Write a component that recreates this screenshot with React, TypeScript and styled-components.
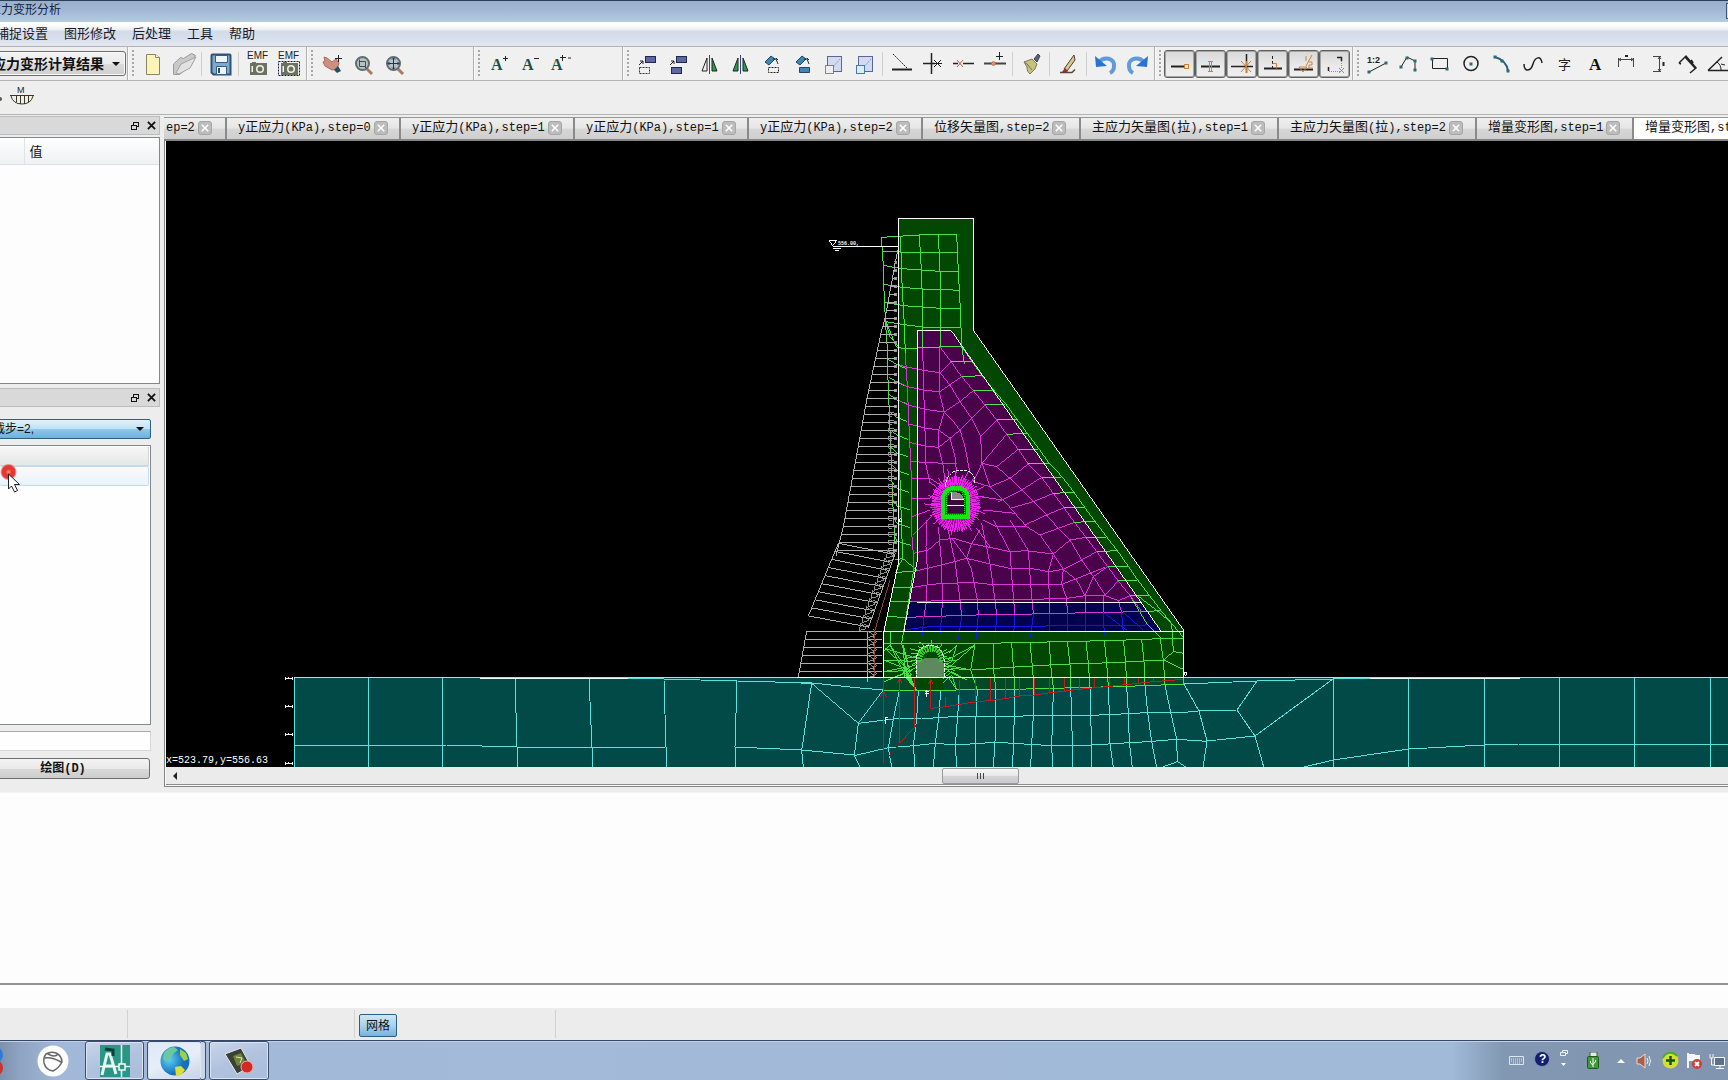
import React from "react";
import styled, { createGlobalStyle, css } from "styled-components";

const SANS = `"Liberation Sans", "Noto Sans CJK SC", sans-serif`;
const MONO = `"Liberation Mono", "Noto Sans CJK SC", monospace`;

const GlobalStyle = createGlobalStyle`
  * { box-sizing: border-box; }
  html, body { margin: 0; padding: 0; height: 100%; overflow: hidden; }
  body { background: #ededed; font-family: ${SANS}; font-size: 13px; color: #111; }
  button, input, select { font: inherit; color: inherit; }
`;

/* ---------- page frame ---------- */

const Page = styled.div`
  height: 100vh;
  display: flex;
  flex-direction: column;
  overflow: hidden;
`;

const TitleBar = styled.header`
  flex: none;
  height: 22px;
  display: flex;
  align-items: flex-start;
  justify-content: space-between;
  border-top: 1px solid #2c3f5a;
  background: linear-gradient(#98aecb, #a3b8d5 45%, #b5cbe0);
`;

const TitleText = styled.h1`
  margin: 0;
  width: 61px;
  display: flex;
  justify-content: flex-end;
  font-size: 12px;
  line-height: 18px;
  font-weight: 400;
  white-space: nowrap;
  color: #16233a;
`;

const CaptionButton = styled.button`
  width: 2px;
  height: 16px;
  margin-top: 2px;
  padding: 0;
  border: 1px solid #3c5576;
  border-right: 0;
  background: #d3e0ef;
`;

const MenuBar = styled.nav`
  flex: none;
  height: 25px;
  display: flex;
  align-items: center;
  gap: 16px;
  padding-bottom: 1px;
  border-bottom: 1px solid #b3b3b6;
  background: linear-gradient(#ffffff 0 3px, #f5f6f8 5px, #e9edf3 8px, #d3dcea 9px, #d9e0ec 17px, #e4e7f0);
`;

const MenuItem = styled.button`
  flex: none;
  padding: 0;
  border: 0;
  background: none;
  font-size: 13px;
  line-height: 20px;
  white-space: nowrap;
  color: #1a1a28;
  &:first-child {
    width: 48px;
    display: flex;
    justify-content: flex-end;
  }
`;

/* ---------- toolbars ---------- */

const ToolBar = styled.div`
  flex: none;
  height: 34px;
  display: flex;
  align-items: stretch;
  overflow: hidden;
  border-bottom: 1px solid #b4b4b4;
  background: #eeeeee;
`;

const ResultSelect = styled.select`
  appearance: none;
  flex: none;
  align-self: center;
  width: 140px;
  height: 25px;
  margin: 0 1px 0 -14px;
  padding: 0 0 0 5px;
  border: 1px solid #6d6d6d;
  border-radius: 3px;
  box-shadow: inset 0 0 0 1px #f8f8f8;
  font-size: 14px;
  font-weight: 700;
  background: linear-gradient(#f2f2f2, #ebebeb 50%, #dcdcdc 51%, #cfcfcf);
`;

const SelectWrap = styled.div`
  display: flex;
  align-items: center;
  position: relative;
  &::after {
    content: "";
    position: absolute;
    right: 7px;
    border: 4px solid transparent;
    border-top-color: #111;
    border-bottom: 0;
    pointer-events: none;
  }
`;

const ToolGroup = styled.div<{ $width?: number }>`
  flex: none;
  display: flex;
  align-items: center;
  padding-right: 2px;
  border-left: 1px solid #b0b0b0;
  box-shadow: inset 1px 0 #fafafa;
  background: #f0f0f0;
  width: ${(p) => (p.$width ? `${p.$width}px` : "auto")};
`;

const Grip = styled.span`
  flex: none;
  width: 2px;
  height: 28px;
  margin: 0 3px 0 4px;
  background: repeating-linear-gradient(#a8a8a8 0 2px, transparent 2px 4px);
`;

const Separator = styled.span`
  flex: none;
  width: 1px;
  height: 24px;
  margin: 0 3px 0 2px;
  background: #cfcfcf;
`;

const ToolButton = styled.button<{ $pressed?: boolean }>`
  flex: none;
  width: 31px;
  height: 28px;
  padding: 0;
  display: flex;
  align-items: center;
  justify-content: center;
  border: 1px solid transparent;
  background: none;
  ${(p) =>
    p.$pressed &&
    css`
      border-color: #5f5f5f;
      border-radius: 3px;
      box-shadow: inset 0 0 0 1px #a5a5a5;
      background: linear-gradient(#d8d8d8, #eaeaea 60%, #efefef);
    `}
`;

const DiagramBar = styled(ToolBar)`
  align-items: flex-end;
  padding: 0 0 2px 3px;
`;

const IconSvg = styled.svg`
  flex: none;
  display: block;
  overflow: visible;
`;

/* ---------- workspace ---------- */

const Workspace = styled.main`
  flex: 1;
  min-height: 0;
  display: flex;
  gap: 4px;
`;

const DockColumn = styled.aside`
  flex: none;
  width: 160px;
  display: flex;
  flex-direction: column;
  padding-top: 1px;
`;

const DockTitle = styled.div`
  flex: none;
  height: 19px;
  display: flex;
  align-items: center;
  justify-content: flex-end;
  gap: 4px;
  padding-right: 2px;
  border: 1px solid #bcbcbc;
  border-left: 0;
  background: #d9d9d9;
`;

const DockButton = styled.button`
  width: 12px;
  height: 14px;
  padding: 0;
  border: 0;
  background: none;
  display: flex;
  align-items: center;
  justify-content: center;
`;

const PropertyBox = styled.div`
  flex: none;
  height: 247px;
  margin: 2px 0 4px;
  border: 1px solid #828790;
  border-left: 0;
  background: #fdfdfd;
`;

const PropertyTable = styled.table`
  width: 100%;
  border-collapse: collapse;
  th {
    height: 26px;
    padding: 2px 0 0 5px;
    text-align: left;
    font-size: 13px;
    line-height: 22px;
    font-weight: 400;
    border-bottom: 1px solid #dcdfe3;
    background: linear-gradient(#fefefe, #f6f7f9 50%, #f0f1f3);
  }
  th:first-child {
    width: 24px;
    border-right: 1px solid #dfe2e6;
  }
`;

const StepPanel = styled.div`
  flex: 1;
  display: flex;
  flex-direction: column;
  padding: 12px 9px 0 0;
`;

const StepSelect = styled.select`
  appearance: none;
  height: 20px;
  width: 175px;
  margin-left: -24px;
  padding: 0 0 0 4px;
  border: 1px solid #2f5f84;
  border-radius: 2px;
  font-family: ${SANS};
  font-size: 12px;
  line-height: 18px;
  background: linear-gradient(#dff2fb, #bfe2f5 48%, #90c8ea 52%, #6bb0dc);
`;

const StepList = styled.div`
  height: 280px;
  margin: 6px 0;
  padding: 1px 1px 0 0;
  border: 1px solid #828790;
  border-left: 0;
  background: #fefefe;
`;

const StepHeader = styled.div`
  height: 19px;
  border-right: 1px solid #d5d5d5;
  border-bottom: 1px solid #d5d5d5;
  background: linear-gradient(#f6f6f6, #e6e7e7);
`;

const StepRow = styled.button`
  display: block;
  width: 100%;
  height: 20px;
  border: 1px solid #c4dbee;
  border-left: 0;
  border-radius: 2px;
  background: linear-gradient(#f9fbfe, #eaf3fc);
`;

const StepField = styled.input`
  height: 20px;
  width: 100%;
  border: 1px solid #d8d8d8;
  border-left: 0;
  border-top-color: #a9a9a9;
  background: #fefefe;
`;

const DrawButton = styled.button`
  height: 21px;
  width: 174px;
  margin: 7px 0 0 -24px;
  padding: 0;
  border: 1px solid #6e6e6e;
  border-radius: 3px;
  font-family: ${MONO};
  font-size: 12px;
  line-height: 18px;
  font-weight: 700;
  background: linear-gradient(#f4f4f4, #e9e9e9 50%, #d9d9d9 52%, #cdcdcd);
`;

const View = styled.section`
  flex: 1;
  min-width: 0;
  display: flex;
  flex-direction: column;
  padding: 2px 0 5px;
`;

const TabStrip = styled.div`
  flex: none;
  height: 22px;
  display: flex;
  align-items: stretch;
  overflow: hidden;
`;

const Tab = styled.div<{ $width: number; $active?: boolean }>`
  flex: none;
  width: ${(p) => p.$width}px;
  display: flex;
  align-items: center;
  gap: 3px;
  padding: 0 0 1px 11px;
  border-top: 1px solid #989898;
  border-right: 2px solid #8a8a8a;
  background: ${(p) => (p.$active ? "#ffffff" : "linear-gradient(#efefef, #e6e6e6 48%, #d6d6d6 54%, #cfcfcf)")};
  &:first-child {
    padding-left: 2px;
  }
`;

const TabLabel = styled.button`
  padding: 0;
  border: 0;
  background: none;
  font-family: ${MONO};
  font-size: 12px;
  line-height: 18px;
  white-space: nowrap;
`;

const Han = styled.span`
  font-size: 13px;
`;

const TabClose = styled.button`
  flex: none;
  width: 14px;
  height: 14px;
  padding: 0;
  display: flex;
  align-items: center;
  justify-content: center;
  border: 1px solid #a6a6a6;
  border-radius: 3px;
  background: #bcbcbc;
`;

const CanvasFrame = styled.div`
  flex: 1;
  min-height: 0;
  display: flex;
  flex-direction: column;
  border: 1px solid #858585;
  border-width: 2px 0 1px 1px;
  padding: 0 0 1px 1px;
  background: #fafafa;
`;

const Canvas = styled.div`
  flex: 1;
  min-height: 0;
  position: relative;
  overflow: hidden;
  background: #000;
  svg {
    display: block;
    width: 100%;
    height: 100%;
  }
`;

const Coordinates = styled.output`
  position: absolute;
  left: 0;
  bottom: 0;
  font-family: ${MONO};
  font-size: 10px;
  line-height: 13px;
  color: #ffffff;
`;

const ScrollTrack = styled.div`
  flex: none;
  height: 18px;
  display: flex;
  align-items: center;
  border-bottom: 1px solid #8d8d8d;
  background: #ebebeb;
`;

const ScrollArrow = styled.button`
  width: 17px;
  height: 17px;
  padding: 0;
  display: flex;
  align-items: center;
  justify-content: center;
  border: 0;
  background: none;
`;

const ScrollThumb = styled.button`
  width: 77px;
  height: 16px;
  margin-left: 48.6%;
  padding: 0;
  display: flex;
  align-items: center;
  justify-content: center;
  gap: 2px;
  border: 1px solid #9a9a9a;
  border-radius: 2px;
  background: linear-gradient(#f6f6f6, #e8e8e8 48%, #d4d4d6 52%, #cacacc);
  i {
    width: 1px;
    height: 6px;
    background: #444;
  }
`;

const Output = styled.section`
  flex: none;
  height: 216px;
  display: flex;
  flex-direction: column;
  border-top: 1px solid #f4f4f4;
  background: #fdfdfd;
`;

const OutputLog = styled.div`
  flex: 1;
  border-bottom: 2px solid #939393;
`;

const CommandInput = styled.input`
  flex: none;
  height: 23px;
  width: 100%;
  border: 0;
  background: #fdfdfd;
`;

const StatusBar = styled.footer`
  flex: none;
  height: 32px;
  display: flex;
  align-items: center;
  background: #ececec;
`;

const StatusCell = styled.div<{ $width: number }>`
  flex: none;
  width: ${(p) => p.$width}px;
  height: 28px;
  display: flex;
  align-items: flex-end;
  padding: 0 0 1px 4px;
  border-right: 1px solid #d2d2d2;
`;

const GridToggle = styled.button`
  width: 38px;
  height: 23px;
  padding: 0;
  border: 1px solid #2c5f86;
  border-radius: 2px;
  font-size: 12px;
  line-height: 20px;
  background: linear-gradient(#cfe6f4, #a9d2ec 50%, #78b2da);
`;

/* ---------- taskbar ---------- */

const TaskBar = styled.footer`
  flex: none;
  height: 40px;
  display: flex;
  align-items: stretch;
  border-top: 1px solid #33486a;
  box-shadow: inset 0 1px #c3d0e0;
  background: linear-gradient(90deg, #7c91ab 0, #8fa4c2 20px, #a2b8d8 60px, #a3bad8 30%, #a0bad8 84%, #8298b2 87%, #8195b0 100%);
`;

const TaskSlot = styled.button<{ $width: number; $framed?: boolean; $lit?: boolean }>`
  flex: none;
  width: ${(p) => p.$width}px;
  padding: 0;
  display: flex;
  align-items: center;
  justify-content: center;
  border: 0;
  background: none;
  ${(p) =>
    p.$framed &&
    css`
      margin-right: 3px;
      border: 1px solid #3c4d6b;
      border-radius: 3px;
      box-shadow: inset 0 0 0 1px #dbe5f2;
      background: ${p.$lit
        ? "linear-gradient(160deg, #dde8f6, #e8eef8 50%, #c4d2e8)"
        : "linear-gradient(160deg, #c9d6ea, #b0c2de 50%, #a9bedc)"};
    `}
`;

const QuickLaunch = styled.div`
  flex: none;
  display: flex;
  padding-right: 9px;
`;

const StackEdge = styled.span`
  flex: none;
  width: 5px;
  margin: 0 3px 0 -4px;
  border: 1px solid #3c4d6b;
  border-left: 0;
  border-radius: 0 3px 3px 0;
  background: #c9d6ea;
`;

const Tray = styled.div`
  margin-left: auto;
  display: flex;
  align-items: center;
`;

const TrayButton = styled.button<{ $width: number }>`
  width: ${(p) => p.$width}px;
  padding: 0;
  display: flex;
  align-items: center;
  justify-content: center;
  border: 0;
  background: none;
`;

const PointerMark = styled.div`
  position: absolute;
  left: 0;
  top: 463px;
  pointer-events: none;
`;

/* ---------- toolbar icons ---------- */

const Icon = ({ children }: { children: React.ReactNode }) => (
  <IconSvg width="26" height="26" viewBox="0 0 26 26" fill="none" stroke="#222" strokeWidth="1" aria-hidden>
    {children}
  </IconSvg>
);

const Camera = () => (
  <g stroke="none">
    <path d="M5 12h2v-1h4v1h11v12H5z" fill="#6c7263" />
    <path d="M6.500 15h1.500v6H6.500z" fill="#f3f3e6" />
    <circle cx="15" cy="18" r="4" fill="#f3f3e6" />
    <circle cx="15" cy="18" r="2.500" fill="#6c7263" />
  </g>
);

const EmfText = () => (
  <text x="2" y="8" fontFamily="Liberation Sans, sans-serif" fontSize="10" stroke="none" fill="#222">EMF</text>
);

const BigA = ({ x = 5 }: { x?: number }) => (
  <text x={x} y="19" fontFamily="Liberation Serif, serif" fontWeight="700" fontSize="16" fill="#1f4f42" stroke="none">A</text>
);

const Node = ({ x, y }: { x: number; y: number }) => <rect x={x - 1.5} y={y - 1.5} width="3" height="3" fill="#2e6a70" stroke="none" />;

const fileIcons = [
  ["新建", <Icon><path d="M6.500 3.500h9l4 3v17h-13z" fill="#fbf4b8" stroke="#8a8560" /><path d="M15.500 3.500v3h4" stroke="#8a8560" fill="#fffef0" /></Icon>],
  ["打开", <Icon><path d="M2.500 23.500V13l7-6.500 3 1 8-5 4 2-6 11-10 8z" fill="#c9c9c9" stroke="#9a9a9a" /><path d="M5 22l5-9 15-7-6 11-11 6z" fill="#e2e2e2" stroke="#a2a2a2" /></Icon>],
  null,
  ["保存", <Icon><path d="M3.500 4.500q0-1 1-1h17q1 0 1 1v19h-17l-2-2z" fill="#7fa8cc" stroke="#2f5278" strokeWidth="2" /><path d="M7.500 4.500h12v7h-12zM8.500 15.500h10v8h-10z" fill="#eef4f9" stroke="#335d86" /><path d="M11 17v5" stroke="#284c72" strokeWidth="2" /></Icon>],
  null,
  ["导出EMF", <Icon><EmfText /><Camera /></Icon>],
  ["框选导出EMF", <Icon><EmfText /><Camera /><path d="M2.500 10.500h21v14h-21z" stroke="#18184a" strokeDasharray="2 1" /></Icon>],
] as const;

const Lens = () => (
  <g>
    <path d="M17 18l5 5" stroke="#a87a5e" strokeWidth="3" />
    <circle cx="12.500" cy="12.500" r="6.500" fill="#b6c2c4" stroke="#5e6c70" strokeWidth="2" />
  </g>
);

const viewIcons = [
  ["平移", <Icon><path d="M5 6l3 1 5 4 4-3 3 4-2 6-5 1-7-4-2-4 2-1z" fill="#cc8f82" stroke="#a86c60" /><path d="M15 19l4-4 3 5-4 2z" fill="#24525e" stroke="none" /><path d="M19.500 4v7M16 7.500h7" /></Icon>],
  ["窗口缩放", <Icon><Lens /><path d="M9.500 10.500h6v5h-6zM9.500 8.500v4M15.500 13v4" stroke="#3e4c50" /></Icon>],
  ["全部显示", <Icon><Lens /><path d="M12.500 7v11M7 12.500h11M11 8.500L12.500 7 14 8.500M11 16.500l1.500 1.500 1.500-1.500M8.500 11L7 12.500 8.500 14M16.500 11l1.500 1.500-1.500 1.500" stroke="#20307a" /></Icon>],
] as const;

const textIcons = [
  ["放大文字", <Icon><BigA /><path d="M19.500 5v5M17 7.500h5" /></Icon>],
  ["缩小文字", <Icon><BigA /><path d="M17 7.500h5" /></Icon>],
  ["恢复文字", <Icon><BigA x={3} /><path d="M14.500 4v6M12 6.500h6M20 7h3" /></Icon>],
] as const;

const Block = ({ x, y, dash }: { x: number; y: number; dash?: boolean }) => (
  <rect x={x} y={y} width="10" height="6" fill={dash ? "none" : "#5c67a6"} stroke={dash ? "#333" : "#22284a"} strokeDasharray={dash ? "2 1" : undefined} />
);
const Turn = () => <path d="M14 8h3l2 5M17 7l2 2" stroke="#1c2b3b" />;

const editIcons = [
  ["移动", <Icon><path d="M4 14l4-4M5 10h3v3" /><Block x={10.5} y={5.5} /><Block x={4.5} y={16.500} dash /></Icon>],
  ["复制", <Icon><path d="M4 14l4-4M5 10h3v3" /><Block x={10.5} y={5.5} /><Block x={5.5} y={16.500} /></Icon>],
  ["镜像移动", <Icon><path d="M10 7v13H5z" /><path d="M15 7v13h5z" fill="#2c9a4c" /><path d="M12.500 4v19" stroke="#35458c" /></Icon>],
  ["镜像复制", <Icon><path d="M10 7v13H5z" fill="#2c9a4c" /><path d="M15 7v13h5z" fill="#2c9a4c" /><path d="M12.500 4v19" stroke="#35458c" /></Icon>],
  ["旋转移动", <Icon><path d="M6 11l6-6 4 3-6 6z" fill="#3e86b8" stroke="#1d4668" /><Turn /><path d="M9.500 16.500h10v5h-10z" strokeDasharray="2 1" /></Icon>],
  ["旋转复制", <Icon><path d="M6 11l6-6 4 3-6 6z" fill="#3e86b8" stroke="#1d4668" /><Turn /><path d="M9.500 16.500h10v5h-10z" fill="#3e86b8" stroke="#1d4668" /></Icon>],
  ["缩放移动", <Icon><rect x="6.500" y="5.500" width="14" height="15" fill="#d3daf0" stroke="#59669a" /><path d="M12 16l7-8" stroke="#8d99c4" strokeDasharray="2 1" /><rect x="4.500" y="14.500" width="8" height="8" fill="#eee" strokeDasharray="1 1" /></Icon>],
  ["缩放复制", <Icon><rect x="6.500" y="5.500" width="14" height="15" fill="#d3daf0" stroke="#59669a" /><path d="M12 16l7-8" stroke="#8d99c4" strokeDasharray="2 1" /><rect x="4.500" y="14.500" width="8" height="8" fill="#dcecfa" stroke="#4777b4" /></Icon>],
  null,
  ["延伸", <Icon><path d="M3 18.500h20" strokeWidth="2" /><path d="M4 3l14 14" strokeDasharray="2 1" /></Icon>],
  ["修剪", <Icon><path d="M3 12.500h12M11.500 2v21" strokeWidth="1.500" /><path d="M14 9l7 7M21 9l-7 7M15 12.500h7" /></Icon>],
  ["打断", <Icon><path d="M2 12.500h5M12 12.500h11" strokeWidth="1.500" /><path d="M6 9l6 7M12 9l-6 7" stroke="#c4603a" /></Icon>],
  ["插入节点", <Icon><path d="M2 12.500h22" strokeWidth="2" stroke="#444" /><circle cx="11.500" cy="12.500" r="1.800" stroke="#c4603a" fill="#eca070" /><path d="M17.500 1v8M14 5.500h7" /></Icon>],
  null,
  ["格式刷", <Icon><path d="M15 8l4-5 2 2-3 6z" fill="#59617c" stroke="#3c425c" /><path d="M5 11l8-3 5 5-2 5-5 5c-2-2-3-3-3-7z" fill="#c5c27a" stroke="#7d7b50" /><path d="M5 11l3 2 5 6" stroke="#85639a" /></Icon>],
  null,
  ["删除", <Icon><path d="M4 21.500h12l3-3" strokeWidth="1.500" stroke="#554838" /><path d="M8 18L18 4l1 5-8 11z" fill="#d9c88a" stroke="#4d4030" /><path d="M6 21l3-4 3 3-2 2z" fill="#9b2c3a" stroke="none" /></Icon>],
  null,
  ["撤销", <Icon><path d="M6 11c5-6 16-4 15 4 0 4-2 6-4 7" stroke="#5f9bdc" strokeWidth="4" /><path d="M2 5l1 11 11-1z" fill="#2a74cf" stroke="none" /></Icon>],
  ["重做", <Icon><path d="M20 11C15 5 4 7 5 15c0 4 2 6 4 7" stroke="#5f9bdc" strokeWidth="4" /><path d="M24 5l-1 11-11-1z" fill="#2a74cf" stroke="none" /></Icon>],
] as const;

const OR = "#c8813f";
const snapIcons = [
  ["端点捕捉", <Icon><path d="M4 15.500h13" strokeWidth="2" /><rect x="17.500" y="13.500" width="4" height="4" stroke={OR} /></Icon>],
  ["中点捕捉", <Icon><path d="M3 15.500h19" strokeWidth="2" /><path d="M10 10.500h5M10 20.500h5M11.500 11v9M13.500 11v9" stroke={OR} /></Icon>],
  ["交点捕捉", <Icon><path d="M2 15.500h22M17.500 3v19" strokeWidth="1.500" /><path d="M12 10l10 11M22 10l-10 11M17.500 10v12" stroke={OR} /></Icon>],
  ["垂足捕捉", <Icon><path d="M4 17.500h18" strokeWidth="2" /><path d="M12.500 5v12" strokeDasharray="3 2" /><path d="M12.500 12.500h4v5" stroke={OR} /></Icon>],
  ["等分捕捉", <Icon><path d="M3 18.500h19" strokeWidth="2" /><path d="M8 16h8l-4 5z" stroke={OR} /><path d="M15 5v5M21 4l-6 11M18 11h3v3h-3v3h4" stroke={OR} /></Icon>],
  ["延长捕捉", <Icon><path d="M6.500 16v4M15 6.500h5M19.500 6v4" strokeWidth="1.500" /><path d="M7 20.500h11M19.500 10v8" stroke={OR} strokeDasharray="1 1" /><path d="M17 17l5 5M22 17l-5 5" stroke={OR} /></Icon>],
] as const;

const drawIcons = [
  ["直线", <Icon><text x="2" y="12" fontFamily="Liberation Sans, sans-serif" fontSize="9" fontWeight="700" fill="#222" stroke="none">1:2</text><path d="M4 21L21 12" /><Node x={4} y={21} /><Node x={21} y={12} /></Icon>],
  ["多段线", <Icon><path d="M5 16l6-10 8 4v9" /><Node x={5} y={16} /><Node x={11} y={7} /><Node x={19} y={10} /><Node x={19} y={19} /></Icon>],
  ["矩形", <Icon><path d="M5.500 7.500h15v10h-15z" /><Node x={5} y={8} /><Node x={20} y={18} /></Icon>],
  ["圆", <Icon><circle cx="13" cy="12.500" r="7" strokeWidth="1.500" /><Node x={13} y={13} /></Icon>],
  ["圆弧", <Icon><path d="M6 6c7 2 12 7 13 14" stroke="#266080" strokeWidth="2" /><Node x={6} y={6} /><Node x={13} y={10} /><Node x={19} y={20} /></Icon>],
  ["样条", <Icon><path d="M4 13c0 9 7 7 9 0s8-9 9-1" strokeWidth="1.500" /></Icon>],
  ["单行文字", <Icon><text x="7" y="18" fontFamily="Noto Sans CJK SC, sans-serif" fontSize="13" fill="#222" stroke="none">字</text></Icon>],
  ["文字", <Icon><text x="7" y="19" fontFamily="Liberation Serif, serif" fontWeight="700" fontSize="17" fill="#111" stroke="none">A</text></Icon>],
  ["水平标注", <Icon><path d="M5.500 7v9M20.500 7v9M5.500 8.500h15M8 7L6 8.500 8 10M18 7l2 1.500-2 1.500" stroke="#444" /><path d="M12 5h3" strokeWidth="2" /></Icon>],
  ["垂直标注", <Icon><path d="M9 5.500h8M9 20.500h8M15.500 5.500v15M14 8l1.500-2L17 8M14 18l1.500 2L17 18" stroke="#444" /><path d="M19.500 11v4" strokeWidth="2" /></Icon>],
  ["对齐标注", <Icon><path d="M4 12l7-7 10 12-6 5M4 12l2 1M10 6l10 11" strokeWidth="1.500" /><path d="M16 9l2 3" strokeWidth="2" /></Icon>],
  ["角度标注", <Icon><path d="M2 19.500L16 6M2 19.500h24" strokeWidth="1.500" /><path d="M11 11c3 2 4 5 4 8M15 13l4 1" /></Icon>],
] as const;

type Tool = readonly [string, React.ReactNode] | null;

const Tools = ({ items, pressed }: { items: readonly Tool[]; pressed?: boolean }) => (
  <>
    <Grip />
    {items.map((it, i) =>
      it ? (
        <ToolButton key={i} type="button" aria-label={it[0]} aria-pressed={pressed} $pressed={pressed}>
          {it[1]}
        </ToolButton>
      ) : (
        <Separator key={i} />
      )
    )}
  </>
);

/* ---------- model drawing ---------- */

type Pt = [number, number];
const lines = (list: string[]) => list.map((p) => "M" + p.split(" ").join("L")).join("");

/* pressure diagram along the upstream face */
const faceEdge: Pt[] = [[353, 150], [316, 350], [303, 400], [260, 600], [231, 760], [205, 900], [190, 980], [168, 1068]];
const edgeX = (y: number) => {
  for (let i = 1; i < faceEdge.length; i++) {
    const [x0, y0] = faceEdge[i - 1];
    const [x1, y1] = faceEdge[i];
    if (y <= y1) return x0 + ((x1 - x0) * (y - y0)) / (y1 - y0);
  }
  return 168;
};
const pressure: string[] = [faceEdge.map((p) => p.join(",")).join(" ")];
const heads: string[] = [];
for (let k = 0; k < 38; k++) {
  const y = Math.round(187 + k * 24);
  if (y > 1070) break;
  pressure.push(`${Math.round(edgeX(y))},${y} 350,${y}`);
  if (k > 18) heads.push(`327,${y - 6} 342,${y - 6}`, `327,${y - 6} 327,${y + 6} 336,${y + 6}`);
  heads.push(`343,${y - 3} 350,${y - 3} 350,${y + 3} 343,${y + 3}`);
}
pressure.push("175,1030 85,1248", "345,1062 265,1283", "262,1294 262,1445", "80,1294 55,1430");
for (let k = 0; k <= 9; k++) {
  const x = 175 - k * 10;
  const y = 1030 + k * 24.200;
  const rx = 345 - k * 9;
  pressure.push(`${x},${y} ${rx},${y + 33}`);
  heads.push(`${rx - 22},${y + 20} ${rx - 6},${y + 38} ${rx - 26},${y + 44} ${rx - 22},${y + 20}`, `${rx - 12},${y + 26} ${rx + 4},${y + 30}`);
}
for (let k = 0; k < 6; k++) {
  const y = 1294 + k * 24;
  pressure.push(`${80 - k * 4},${y} 305,${y}`);
  heads.push(`262,${y} 285,${y + 12} 262,${y + 20}`, `280,${y - 6} 290,${y + 6} 280,${y + 16}`);
}

/* strip of elements along the downstream face */
const innerFace: Pt[] = [[513, 485], [545, 530], [580, 572], [615, 615], [650, 660], [680, 703], [715, 748], [745, 792], [785, 832], [820, 880], [852, 923], [883, 967], [918, 1012], [950, 1055], [983, 1100], [1015, 1143], [1050, 1187], [1085, 1235]];
const outerFace: Pt[] = innerFace.map(([x, y], i) => [x + 62 - (i > 14 ? 4 : 0), y - (i % 2 ? 3 : 1)]);
const faceMesh = [
  "545,438 " + outerFace.map((p) => p.join(",")).join(" ") + " 1175,1270 1212,1315",
  ...innerFace.map((p, i) => `${p.join(",")} ${outerFace[i].join(",")}`),
];
const faceInnerLine = "480,441 " + innerFace.map((p) => p.join(",")).join(" ");

const upstreamMesh: string[] = [];
for (let k = 0; k < 11; k++) {
  const y = 478 + k * 53;
  upstreamMesh.push(`${324 + k * 2},${y} 352,${y + 16} ${378 + k * 1.500},${y + 28}`);
}

const greenMesh = [
  "304,112 355,109 418,105 475,103 530,103",
  "307,154 362,156 420,159 533,157",
  "310,196 364,206 424,210 480,214 535,214",
  "311,253 366,262 427,267 480,268 538,271",
  "314,307 370,317 428,321 482,325 541,327",
  "316,365 373,374 428,381 482,382 544,382",
  "350,442 376,446 428,443 480,441 545,438",
  "304,112 307,154 310,196 311,253 314,307 316,365 321,430 324,540 328,640 333,760 338,900 343,1000 340,1080",
  "362,109 364,206 368,290 373,374 376,460",
  "418,105 424,210 428,321 428,443",
  "475,103 480,214 482,325 480,441",
  "530,103 535,214 541,327 545,438 553,492",
  "316,360 350,442", "316,360 330,410 355,440", "358,640 360,840 368,1075 350,1110",
  "345,1080 368,1075 412,1112 345,1118", "335,1162 400,1162", "330,1205 395,1205", "320,1250 378,1252",
  "400,1115 378,1252 365,1330 385,1400", "310,1332 585,1332 690,1328 860,1325 1040,1320 1170,1315 1212,1315",
  "575,1410 690,1402 840,1393 1000,1388 1150,1380 1180,1355 1175,1270",
  "310,1472 410,1472 530,1470 700,1468 930,1462 1100,1457 1212,1452",
  "585,1332 572,1410 592,1470", "640,1330 640,1405 648,1470", "695,1328 700,1400 705,1468", "750,1327 757,1398 762,1467",
  "808,1326 812,1395 820,1465", "862,1325 870,1392 872,1463", "918,1324 925,1390 930,1462", "973,1322 980,1390 985,1460",
  "1030,1320 1037,1387 1040,1460", "1085,1318 1092,1385 1095,1457", "1050,1187 1100,1270 1140,1310 1150,1380 1155,1455",
  "1150,1380 1210,1408", "1180,1355 1212,1360", "1070,1185 1135,1235 1175,1270", "330,1294 332,1332 310,1355",
  "1212,1292 1212,1453", "310,1292 310,1472",
];

const tunnelFan: string[] = [];
for (let k = 0; k <= 26; k++) {
  const a = Math.PI * (1.150 - (k / 26) * 1.300);
  const r = 48 + (k % 3) * 10;
  const ix = 451 + Math.cos(a) * 40;
  const iy = 1385 - Math.sin(a) * 44;
  tunnelFan.push(`${ix.toFixed(0)},${iy.toFixed(0)} ${(451 + Math.cos(a + 0.120) * r * 1.150).toFixed(0)},${(1388 - Math.sin(a + 0.120) * r).toFixed(0)}`);
}
["315,1345", "312,1380", "312,1415", "312,1445", "330,1335", "370,1335"].forEach((p, i) => tunnelFan.push(`${p} ${395},${1370 + i * 14}`, `${p} 375,${1400 + i * 6} 410,1472`));
["530,1335", "585,1335", "572,1410", "560,1440", "530,1470"].forEach((p, i) => tunnelFan.push(`${p} ${505},${1360 + i * 18}`, `${p} 515,${1385 + i * 10} 490,${1400 + i * 12}`));

const magentaMesh = [
  "376,460 382,560 388,700 394,830 396,1010 400,1062 400,1115",
  "428,443 432,600 435,690 437,790 450,850",
  "480,441 480,518 478,576 493,636 476,690 476,742 490,800 495,850",
  "352,492 376,500 430,511 480,518 513,485",
  "352,545 382,560 433,570 478,576 545,530",
  "355,600 385,615 435,628 493,636 540,605 580,572",
  "388,672 436,684 476,690",
  "390,728 437,738 476,742 510,715 540,690 575,655 615,615",
  "392,785 438,787 490,790 530,790", "394,836 450,835 490,860",
  "480,518 510,555 540,605 575,655 602,710 606,790 580,845",
  "493,636 520,665 540,690 555,740 570,820",
  "476,690 510,715 525,770 530,820", "602,710 650,660", "606,790 640,750 680,703",
  "606,790 650,800 690,835 725,870 760,905 800,945 835,985 870,1020 905,1080 940,1130 975,1185",
  "650,800 715,748", "690,835 745,792", "725,870 785,832", "760,905 820,880", "800,945 852,923", "835,985 883,967", "870,1020 918,1012", "905,1080 950,1055", "940,1130 983,1100",
  "606,790 630,860 670,900 705,940 740,980 780,1005 820,1062 850,1108",
  "630,860 690,835", "655,905 725,870", "690,925 760,905", "735,975 800,945", "780,1005 835,985", "820,1062 870,1020", "850,1108 905,1080",
  "580,845 630,860", "600,890 670,900", "610,930 705,940", "610,960 650,980 740,980", "590,985 630,1040",
  "396,895 450,895 470,870", "396,950 450,930", "398,1005 455,950", "400,1060 445,1050 480,1020 520,1015 570,1030 620,1040 690,1055 740,1052 820,1062",
  "412,1112 485,1095 560,1075 630,1092 690,1105 752,1105 805,1115 850,1108",
  "400,1162 440,1155 485,1150 585,1148 640,1154 750,1153 845,1153 905,1130 975,1102",
  "395,1205 540,1200 690,1200 860,1195 915,1187 970,1185 1015,1202 1050,1187",
  "378,1252 590,1245 760,1242 970,1237 1090,1235",
  "440,960 438,1040 442,1110 440,1202 432,1248", "475,980 485,1095 487,1200 485,1248",
  "500,970 525,1085 540,1200 545,1248", "515,1015 560,1075 575,1110 592,1200 595,1245",
  "560,1075 575,1030 600,990", "605,970 630,1092 645,1200 650,1245", "640,960 690,1055 697,1154 705,1244",
  "690,960 745,1052 752,1153 760,1242", "820,1062 805,1115 810,1242", "850,1108 845,1153 860,1195 862,1240",
  "850,1108 890,1140 915,1187 918,1240", "905,1080 940,1130 915,1187", "970,1185 970,1237", "975,1185 1015,1143", "1015,1202 1025,1237",
];

/* dense refinement around the gallery */
const halo: string[] = [];
for (let k = 0; k < 46; k++) {
  const a = (k / 46) * Math.PI * 2;
  const r = 62 + ((k * 7) % 5) * 8;
  halo.push(`${(527 + Math.cos(a) * 40).toFixed(0)},${(908 + Math.sin(a) * 44).toFixed(0)} ${(527 + Math.cos(a + 0.080) * r).toFixed(0)},${(906 + Math.sin(a + 0.080) * r * 1.080).toFixed(0)}`);
}

const blueMesh = [
  "372,1290 440,1281 700,1279 1100,1275", "432,1248 425,1318", "485,1248 478,1318", "545,1248 535,1318", "595,1245 588,1318", "650,1245 645,1318", "705,1244 700,1318",
  "760,1242 752,1310", "810,1242 808,1310", "862,1240 862,1310", "918,1240 918,1310", "970,1237 973,1305", "1025,1237 1030,1300", "970,1237 1040,1290", "1030,1237 1090,1290",
];

const redPlot = [
  "311,1432 311,1690", "359,1440 359,1630 405,1580 405,1432",
  "452,1525 497,1520 540,1513 590,1505 630,1502 680,1495 720,1488 765,1485 810,1478 850,1474 895,1468 1000,1458 1120,1445 1210,1438",
  "452,1440 452,1525", "497,1490 497,1520", "540,1440 540,1513", "587,1434 587,1505", "631,1434 631,1502", "676,1434 676,1495", "720,1434 720,1488",
  "765,1434 765,1485", "810,1434 810,1478", "855,1434 855,1473", "900,1434 900,1468", "944,1434 944,1463", "988,1434 988,1459", "1033,1434 1033,1454", "1077,1434 1077,1450", "1120,1434 1120,1445",
  "302,1490 311,1475 320,1490", "352,1450 359,1435 366,1450", "446,1452 452,1438 458,1452",
];

const groundCentre = [
  "95,1450 235,1570 310,1470", "95,1450 65,1652 70,1702", "235,1570 223,1667 240,1702",
  "223,1667 325,1643 402,1637 466,1630 526,1635 645,1627 700,1630 815,1637 935,1635 1048,1628 1105,1625 1190,1618 1280,1624",
  "235,1570 340,1557 410,1557 476,1553 533,1549 645,1550 815,1546 930,1546 985,1544 1100,1538 1215,1537 1256,1533",
  "358,1472 340,1557 325,1643 335,1702", "415,1472 410,1557 400,1637 405,1702", "482,1472 476,1553 466,1630 460,1702",
  "538,1470 533,1549 526,1635 530,1702", "592,1470 588,1549 585,1630 588,1702", "648,1470 646,1550 645,1627 640,1702",
  "705,1468 703,1548 700,1630 698,1702", "762,1467 760,1547 755,1633 752,1702", "820,1465 818,1546 815,1637 818,1702",
  "872,1463 875,1546 877,1635 877,1702", "930,1462 932,1546 935,1635 935,1702", "985,1460 988,1544 990,1630 1000,1702",
  "1040,1460 1045,1540 1048,1628 1057,1702", "1095,1457 1103,1538 1115,1625 1130,1702", "1155,1455 1172,1537 1190,1618 1192,1685 1145,1702",
  "1192,1685 1220,1702",
];

const groundSides = [
  "294,677 294,768", "368,677 368,768", "442,677 442,768", "515,678 517,747 517,768", "589,678 592,748 593,768", "664,680 666,747 667,768", "737,681 735,747 736,768",
  "294,677 515,678 627,678 737,681 812,683 860,688 883,690",
  "294,745 446,745 517,747 592,748 666,747 735,747 802,750 854,755",
  "1184,684 1257,681 1333,679 1408,678 1520,677 1728,677",
  "1184,684 1199,711 1207,741 1203,768", "1257,681 1237,710 1255,736 1264,768", "1333,679 1255,736 1207,741", "1199,711 1237,710",
  "1333,679 1333,768", "1408,678 1409,768", "1484,677 1484,768", "1559,677 1560,768", "1634,677 1635,768", "1710,677 1710,768",
  "1300,768 1333,760 1409,749 1484,745 1519,744 1728,744",
];

const ModelDrawing = () => (
  <svg shapeRendering="crispEdges" fill="none" strokeWidth="1" role="img" aria-label="增量变形图">
    <defs>
      <pattern id="greenDots" width="6" height="6" patternUnits="userSpaceOnUse">
        <rect width="6" height="6" fill="#0d5c0d" />
        <rect width="4" height="4" fill="#19e319" />
      </pattern>
    </defs>
    <g transform="translate(-166 -141)">
      <rect x="294" y="677" width="4000" height="400" fill="#024a48" />
      <path d={lines(groundSides)} stroke="#5ae2de" />
      <path d="M294 677.500H1728" stroke="#8fecea" />
      <path d="M797 677.500H1184M480 678.500H628M1370 678.500H1520" stroke="#e4fffd" />
      {[678, 706, 734, 763].map((y) => (
        <path key={y} d={`M286 ${y + 0.5}h7M285.500 ${y - 1}v3M288.500 ${y - 1}v1M292.500 ${y - 1}v1M292.500 ${y + 1}v1`} stroke="#f4f4f4" />
      ))}
      <g transform="translate(780 200) scale(0.33333)" strokeWidth="3">
        <path d="M355 55H581V392L1212 1292V1432H310V1292L355 1090Z" fill="#024802" />
        <path d="M412 392H514L1083 1207H388L412 1080Z" fill="#4a024a" />
        <path d="M388 1207H1083L1142 1292H372Z" fill="#02024e" />
        <path d={lines(groundCentre)} stroke="#5ae2de" />
        <path d="M95 1450L0 1447" stroke="#5ae2de" />
        <path d="M310 1432H1212V1452L700 1468L310 1472Z" fill="#024802" opacity="0.500" />
        <path d="M410 1470V1385Q410 1337 451 1337T493 1385V1470Z" fill="#024802" />
        <path d={lines(greenMesh.concat(upstreamMesh, tunnelFan))} stroke="#48e048" />
        <path d={lines(magentaMesh)} stroke="#dc32dc" />
        <path d={lines([faceInnerLine])} stroke="#dc32dc" />
        <path d={lines(faceMesh)} stroke="#54e054" />
        <path d={lines(blueMesh)} stroke="#1818e0" />
        <ellipse cx="527" cy="912" rx="66" ry="78" fill="#d418d4" opacity="0.600" />
        <ellipse cx="527" cy="912" rx="60" ry="70" stroke="#f020f0" strokeWidth="26" strokeDasharray="3 3" />
        <path d={lines(halo)} stroke="#f020f0" />
        <path d="M496 860Q500 812 543 811T585 850" stroke="#fff" strokeDasharray="9 3" />
        <path d="M483 958V900Q485 858 527 857T570 900V958Z" fill="url(#greenDots)" />
        <path d="M488 952V900Q490 864 527 863T565 900V952M484 952H569" stroke="#19e319" strokeWidth="12" />
        <path d="M502 940V898Q505 876 527 874T552 898V940Z" fill="#3c0a3c" />
        <path d="M515 876Q545 874 552 898H515Z" fill="#8a8a8a" />
        <path d="M515 876V898H552M502 916H552" stroke="#fff" strokeWidth="4" />
        <path d="M408 1432V1395Q412 1375 451 1373T492 1395V1432Z" fill="#5c8a5c" />
        <path d="M415 1385Q420 1347 451 1346T487 1385" stroke="#24d824" strokeWidth="18" strokeDasharray="5 3" />
        <path d="M410 1372Q415 1337 451 1336T493 1385V1432M410 1365V1432" stroke="#e0ffe0" strokeDasharray="12 3" />
        <path d={lines(pressure)} stroke="#b0b0b0" />
        <path d={lines(heads)} stroke="#8f948f" />
        <path d="M330 1140L285 1290V1430" stroke="#8a4630" />
        <path d={lines(redPlot)} stroke="#c41c1c" />
        <path d="M311 1690L359 1630M405 1580L452 1525" stroke="#7a2020" strokeDasharray="6 4" />
        <path d="M355 55H581V392L1212 1292V1432M355 55V1090L312 1292V1432" stroke="#fff" />
        <path d="M412 392H514L1083 1207L1142 1292M412 392V1080L388 1207L372 1292M412 1207H1083M312 1294H1212M52 1432H1212" stroke="#fff" />
        <path d="M147 121H170L158 137ZM158 139H355M160 145H183M166 152H176" stroke="#fff" />
        <g fill="#fff" fontFamily="Liberation Mono, monospace" fontWeight="700">
          <text x="174" y="135" fontSize="15">556.00,</text>
        </g>
        <path d="M436 1475h10M436 1482h10M440 1470v20M314 1552h9M314 1560h9M318 1552v20M1215 1417h4v9h-4zM360 956h4v9h-4z" stroke="#fff" />
      </g>
    </g>
  </svg>
);

/* ---------- window content ---------- */

const tabs: { label: string; width: number; active?: boolean }[] = [
  { label: "ep=2", width: 63 },
  { label: "y正应力(KPa),step=0", width: 174 },
  { label: "y正应力(KPa),step=1", width: 174 },
  { label: "y正应力(KPa),step=1", width: 174 },
  { label: "y正应力(KPa),step=2", width: 174 },
  { label: "位移矢量图,step=2", width: 158 },
  { label: "主应力矢量图(拉),step=1", width: 198 },
  { label: "主应力矢量图(拉),step=2", width: 198 },
  { label: "增量变形图,step=1", width: 157 },
  { label: "增量变形图,step=2", width: 158, active: true },
];

const MixedText = ({ text }: { text: string }) => (
  <>
    {text.split(/([\u4e00-\u9fff]+)/).map((part, i) => (i % 2 ? <Han key={i}>{part}</Han> : part))}
  </>
);

const Cross = ({ color, size = 10 }: { color: string; size?: number }) => (
  <svg width={size} height={size} viewBox="0 0 10 10" stroke={color} strokeWidth="2" aria-hidden>
    <path d="M1 1l8 8M9 1l-8 8" />
  </svg>
);

const DockHead = () => (
  <DockTitle>
    <DockButton type="button" aria-label="浮动">
      <svg width="9" height="10" fill="none" stroke="#111" shapeRendering="crispEdges" aria-hidden>
        <path d="M2.500 4V1.500h5v4H6M0.500 4.500h5v4h-5zM2 1h6M0 4h6" />
      </svg>
    </DockButton>
    <DockButton type="button" aria-label="关闭"><Cross color="#111" size={9} /></DockButton>
  </DockTitle>
);

const Task = () => (
  <TaskBar>
    <QuickLaunch>
      <TaskSlot type="button" aria-label="开始" $width={30}>
        <svg width="30" height="38" aria-hidden>
          <circle cx="-5" cy="13" r="8" fill="#2f7ad8" />
          <circle cx="-5" cy="26" r="8" fill="#c8342e" />
        </svg>
      </TaskSlot>
      <TaskSlot type="button" aria-label="浏览器" $width={46}>
        <svg width="32" height="32" viewBox="0 0 32 32" fill="none" aria-hidden>
          <circle cx="16" cy="16" r="15.500" fill="#fcfcfc" />
          <path d="M9 9Q14 6 19 8Q25 11 25 17Q22 23 16 26Q9 25 7 18Q6 13 9 9ZM8 13Q15 12 24 17M11 9Q18 13 21 9" stroke="#666" strokeWidth="1.500" />
        </svg>
      </TaskSlot>
    </QuickLaunch>
    <TaskSlot type="button" aria-label="AutoCAD" $width={59} $framed>
      <svg width="30" height="32" viewBox="0 0 30 32" fill="none" aria-hidden>
        <rect width="30" height="32" fill="#2b9686" />
        <path d="M2 30L7 9h3l6 20M5 21h7" stroke="#e6f5f1" strokeWidth="3" />
        <path d="M5 4l8 1v6" stroke="#0e3f38" strokeWidth="3" />
        <path d="M21.500 0v32M0 21.500h30" stroke="#f2fffc" strokeWidth="1.500" />
        <rect x="19" y="19" width="6" height="6" fill="#2b9686" stroke="#f2fffc" strokeWidth="1.500" />
      </svg>
    </TaskSlot>
    <TaskSlot type="button" aria-label="地图" $width={55} $framed $lit>
      <svg width="30" height="32" viewBox="0 0 30 32" aria-hidden>
        <defs>
          <radialGradient id="globe" cx="0.3" cy="0.45">
            <stop offset="0" stopColor="#5cd0f4" />
            <stop offset="1" stopColor="#1671ba" />
          </radialGradient>
        </defs>
        <circle cx="15" cy="16" r="14.500" fill="url(#globe)" />
        <path d="M4 8q4-6 10-6l4 3-4 3-3 5-5 4-3-3z" fill="#6cc8a0" />
        <path d="M15 22l6-1 4 4-4 5-5 1z" fill="#d8df3a" />
        <path d="M20 4l6 4 2 6-4 2-4-6z" fill="#9ccf4a" />
      </svg>
    </TaskSlot>
    <StackEdge />
    <TaskSlot type="button" aria-label="录屏" $width={60} $framed>
      <svg width="32" height="28" viewBox="0 0 32 28" aria-hidden>
        <path d="M2 7L18 1l10 18-14 8z" fill="#3c4138" stroke="#e8e8e8" />
        <path d="M10 9l8-3 5 10-9 3z" fill="#6d8140" />
        <path d="M13 10l6 1-2 5" fill="none" stroke="#e3f0a0" />
        <circle cx="24" cy="20" r="6" fill="#d42a26" stroke="#f0b0a8" />
      </svg>
    </TaskSlot>
    <Tray>
      <TrayButton type="button" aria-label="键盘" $width={28}>
        <svg width="15" height="9" fill="none" stroke="#dfe6ee" aria-hidden>
          <path d="M0.500 0.500h14v8H0.500z" />
          <path d="M2 3h11M2 5h11M4 7h7" strokeDasharray="1 1" />
        </svg>
      </TrayButton>
      <TrayButton type="button" aria-label="帮助" $width={24}>
        <svg width="16" height="20" aria-hidden>
          <circle cx="8" cy="8" r="7.500" fill="#14206e" stroke="#7c8fc4" />
          <text x="5" y="12" fontFamily="Liberation Sans, sans-serif" fontWeight="700" fontSize="12" fill="#fff">?</text>
        </svg>
      </TrayButton>
      <TrayButton type="button" aria-label="语言栏" $width={20}>
        <svg width="10" height="26" fill="none" stroke="#eef3f8" aria-hidden>
          <path d="M3.500 4V2.500h5v3H7M1.500 4.500h5v3h-5z" />
          <path d="M2 15h5l-2.500 3z" fill="#fff" stroke="none" />
        </svg>
      </TrayButton>
      <TrayButton type="button" aria-label="USB" $width={38}>
        <svg width="12" height="17" aria-hidden>
          <path d="M3 0h7v5H3z" fill="#e3ebe3" stroke="#415c41" />
          <rect x="0.500" y="4.500" width="11" height="12" rx="1" fill="#3f9a36" stroke="#1f5a1c" />
          <path d="M6 6v9M3.500 9v2l2.500 2M8.500 8v2L6 12" stroke="#fff" fill="none" />
        </svg>
      </TrayButton>
      <TrayButton type="button" aria-label="显示隐藏的图标" $width={18}>
        <svg width="8" height="5" aria-hidden><path d="M0 5l4-4 4 4z" fill="#fff" /></svg>
      </TrayButton>
      <TrayButton type="button" aria-label="音量" $width={28}>
        <svg width="16" height="16" fill="none" aria-hidden>
          <path d="M1 5h3l5-4v14l-5-4H1z" fill="#a8604c" stroke="#f0d8ce" />
          <path d="M11 5q2 3 0 6M13 3q3 5 0 10" stroke="#eee" />
        </svg>
      </TrayButton>
      <TrayButton type="button" aria-label="安全" $width={24}>
        <svg width="17" height="17" aria-hidden>
          <circle cx="8.500" cy="8.500" r="8" fill="#d4e02c" />
          <path d="M1 6a8 8 0 0 1 14-2" stroke="#4ca83c" strokeWidth="2" fill="none" />
          <path d="M8.500 4v9M4 8.500h9" stroke="#16501c" strokeWidth="2.500" />
        </svg>
      </TrayButton>
      <TrayButton type="button" aria-label="操作中心" $width={24}>
        <svg width="17" height="17" fill="none" aria-hidden>
          <path d="M2 1v15" stroke="#f3f3f3" strokeWidth="2" />
          <path d="M3 2h5l2 1h4v7H9L8 9H3z" fill="#f5f7fa" />
          <circle cx="11" cy="12" r="5" fill="#d43a34" />
          <path d="M9 10l4 4M13 10l-4 4" stroke="#fff" strokeWidth="2" />
        </svg>
      </TrayButton>
      <TrayButton type="button" aria-label="网络" $width={22}>
        <svg width="16" height="16" fill="none" stroke="#f3f6fa" aria-hidden>
          <path d="M5.500 4.500h10v8h-10z" fill="#5c7288" />
          <path d="M7 15.500h8M11 13v2M1 1v4h3V1M2.500 5v7h3" />
        </svg>
      </TrayButton>
    </Tray>
  </TaskBar>
);

export default function App() {
  return (
    <Page>
      <GlobalStyle />
      <TitleBar>
        <TitleText>应力变形分析</TitleText>
        <CaptionButton type="button" aria-label="最小化" />
      </TitleBar>
      <MenuBar>
        {["捕捉设置", "图形修改", "后处理", "工具", "帮助"].map((m) => (
          <MenuItem key={m} type="button">{m}</MenuItem>
        ))}
      </MenuBar>

      <ToolBar>
        <SelectWrap>
          <ResultSelect aria-label="计算结果"><option>应力变形计算结果</option></ResultSelect>
        </SelectWrap>
        <ToolGroup><Tools items={fileIcons} /></ToolGroup>
        <ToolGroup $width={167}><Tools items={viewIcons} /></ToolGroup>
        <ToolGroup $width={149}><Tools items={textIcons} /></ToolGroup>
        <ToolGroup><Tools items={editIcons} /></ToolGroup>
        <ToolGroup><Tools items={snapIcons} pressed /></ToolGroup>
        <ToolGroup><Tools items={drawIcons} /></ToolGroup>
      </ToolBar>
      <DiagramBar>
        <IconSvg width="3" height="26" aria-hidden><circle cx="-3" cy="13" r="2" fill="#555" /></IconSvg>
        <ToolButton type="button" aria-label="弯矩图">
          <Icon>
            <text x="8" y="8" fontFamily="Liberation Sans, sans-serif" fontSize="9" fill="#222" stroke="none">M</text>
            <path d="M1 10.500h24M2 11q2 8 11 8t11-8M7.500 11v6M11.500 11v8M15.500 11v8M19.500 11v6" stroke="#3a3820" />
          </Icon>
        </ToolButton>
      </DiagramBar>

      <Workspace>
        <DockColumn>
          <DockHead />
          <PropertyBox>
            <PropertyTable>
              <thead><tr><th aria-label="属性" /><th>值</th></tr></thead>
            </PropertyTable>
          </PropertyBox>
          <DockHead />
          <StepPanel>
            <SelectWrap>
              <StepSelect aria-label="荷载步"><option>荷载步=2,</option></StepSelect>
            </SelectWrap>
            <StepList>
              <StepHeader />
              <StepRow type="button" aria-label="结果项" />
            </StepList>
            <StepField aria-label="参数" />
            <DrawButton type="button">绘图(D)</DrawButton>
          </StepPanel>
        </DockColumn>

        <View>
          <TabStrip>
            {tabs.map((t, i) => (
              <Tab key={i} $width={t.width} $active={t.active}>
                <TabLabel type="button"><MixedText text={t.label} /></TabLabel>
                <TabClose type="button" aria-label="关闭标签"><Cross color="#fff" size={8} /></TabClose>
              </Tab>
            ))}
          </TabStrip>
          <CanvasFrame>
            <Canvas>
              <ModelDrawing />
              <Coordinates>x=523.79,y=556.63</Coordinates>
            </Canvas>
            <ScrollTrack>
              <ScrollArrow type="button" aria-label="向左滚动">
                <svg width="4" height="8" aria-hidden><path d="M4 0v8L0 4z" fill="#222" /></svg>
              </ScrollArrow>
              <ScrollThumb type="button" aria-label="水平滚动"><i /><i /><i /></ScrollThumb>
            </ScrollTrack>
          </CanvasFrame>
        </View>
      </Workspace>

      <Output>
        <OutputLog />
        <CommandInput aria-label="命令" />
      </Output>
      <StatusBar>
        <StatusCell $width={128} />
        <StatusCell $width={227} />
        <StatusCell $width={201}><GridToggle type="button">网格</GridToggle></StatusCell>
      </StatusBar>
      <Task />

      <PointerMark>
        <svg width="26" height="34" aria-hidden>
          <defs>
            <radialGradient id="click">
              <stop offset="0" stopColor="#ff9a90" />
              <stop offset="0.35" stopColor="#e8342c" />
              <stop offset="0.75" stopColor="#e23a32" />
              <stop offset="1" stopColor="#e23a32" stopOpacity="0" />
            </radialGradient>
          </defs>
          <circle cx="8.500" cy="9" r="8.500" fill="url(#click)" />
          <path d="M8.500 11v15l3-3 3 6 3-1.500-3-6h5z" fill="#fff" stroke="#222" />
        </svg>
      </PointerMark>
    </Page>
  );
}
